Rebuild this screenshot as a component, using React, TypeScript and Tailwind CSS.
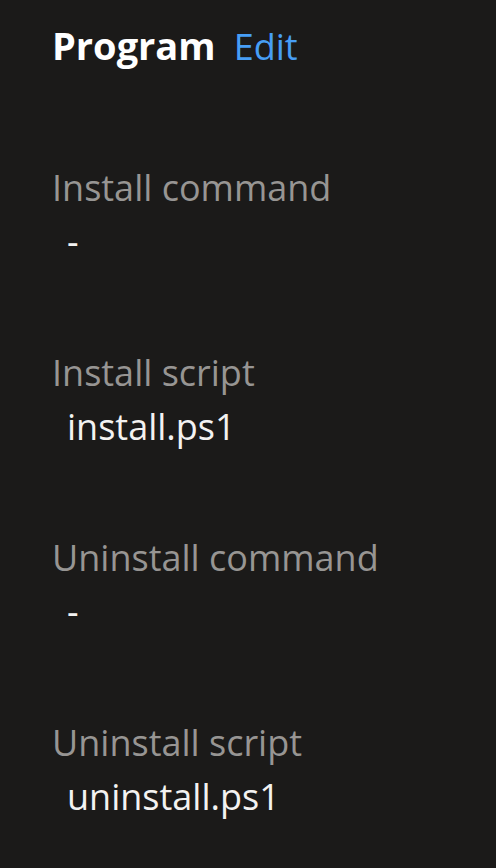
import React from 'react';

const fields = [
  { label: 'Install command', value: '-' },
  { label: 'Install script', value: 'install.ps1' },
  { label: 'Uninstall command', value: '-' },
  { label: 'Uninstall script', value: 'uninstall.ps1' },
];

const App = () => {
  return (
    <div
      className="min-h-screen w-full bg-[#1b1a19] pl-[52px] pt-[19px]"
      style={{ fontFamily: '"Open Sans", "Noto Sans", sans-serif' }}
    >
      {/* Section header */}
      <div className="flex items-baseline gap-[18px] leading-[52px]">
        <h2 className="text-[38px] font-bold text-white">Program</h2>
        <button className="text-[36px] text-[#479ef5]">Edit</button>
      </div>

      {/* Properties */}
      <div className="mt-[90px] flex flex-col gap-[81px]">
        {fields.map((field) => (
          <div key={field.label} className="flex flex-col gap-[4px] text-[36px] leading-[50px]">
            <div className="text-[#979593]">{field.label}</div>
            <div className="pl-[15px] text-[#f3f2f1]">{field.value}</div>
          </div>
        ))}
      </div>
    </div>
  );
};

export default App;
